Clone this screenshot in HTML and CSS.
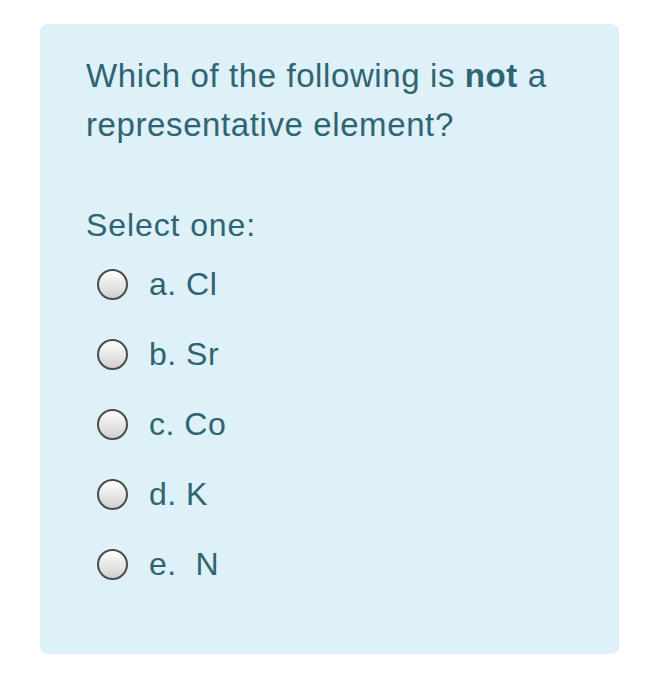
FILE: index.html
```html
<!DOCTYPE html>
<html>
<head>
<meta charset="utf-8">
<link rel="stylesheet" href="styles.css">
</head>
<body>
<div class="card">
  <div class="qtext">Which of the following is <strong>not</strong> a representative element?</div>
  <div class="prompt">Select one:</div>
  <div class="answers">
    <label class="opt"><span class="radio"></span><span class="lbl">a. Cl</span></label>
    <label class="opt"><span class="radio"></span><span class="lbl">b. Sr</span></label>
    <label class="opt"><span class="radio"></span><span class="lbl">c. Co</span></label>
    <label class="opt"><span class="radio"></span><span class="lbl">d. K</span></label>
    <label class="opt"><span class="radio"></span><span class="lbl">e.&nbsp; N</span></label>
  </div>
</div>
</body>
</html>
```
FILE: styles.css
```css
html, body {
  margin: 0;
  padding: 0;
  background: #ffffff;
}
body {
  font-family: "Liberation Sans", Arial, sans-serif;
  color: #2f6473;
}
.card {
  margin: 24px 0 0 40px;
  width: 579px;
  height: 630px;
  box-sizing: border-box;
  background: #def0f8;
  border-radius: 8px;
  padding: 27px 20px 0 46px;
}
.qtext {
  font-size: 33px;
  letter-spacing: 0.6px;
  line-height: 49px;
}
.qtext strong {
  font-weight: bold;
}
.prompt {
  font-size: 32px;
  letter-spacing: 0.9px;
  line-height: 48px;
  margin-top: 52px;
}
.answers {
  display: flex;
  flex-direction: column;
  margin-top: 0;
}
.opt {
  display: flex;
  align-items: center;
  height: 70px;
  font-size: 32px;
  letter-spacing: 0.5px;
}
.radio {
  width: 27px;
  height: 27px;
  border: 2.5px solid #4a4a4a;
  border-radius: 50%;
  background: linear-gradient(#ffffff, #d0d0d0);
  margin-left: 11px;
  margin-right: 21px;
  flex: none;
}
.lbl {
  display: inline-block;
}
```
